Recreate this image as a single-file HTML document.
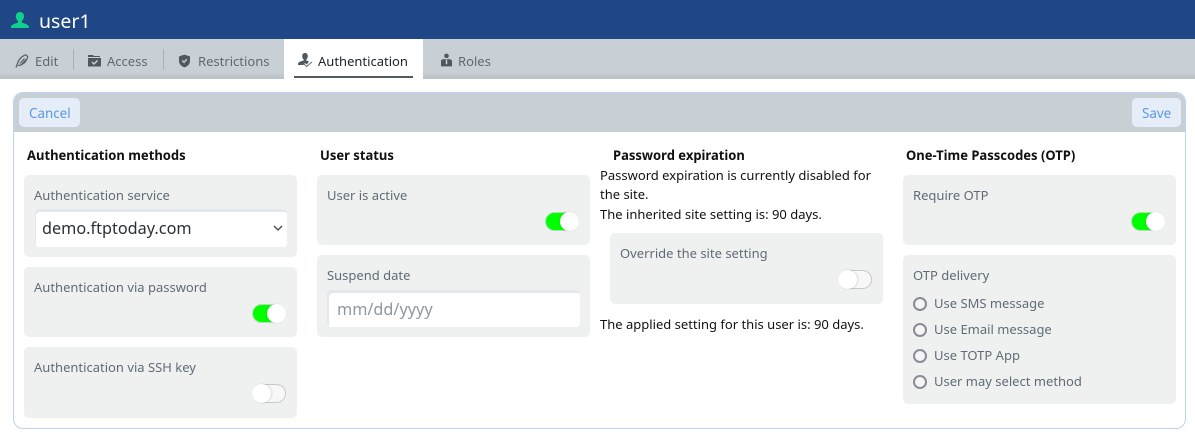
<!DOCTYPE html>
<html><head><meta charset="utf-8"><style>
html,body{margin:0;padding:0;width:1195px;height:435px;overflow:hidden;background:#fff}
body{position:relative;font-family:"Noto Sans","Liberation Sans",sans-serif;font-size:13px;color:#111}
div,svg,span{position:absolute}
.t{white-space:nowrap;line-height:20px;height:20px}
.h{font-weight:700;color:#111}
.l{color:#5f6b76}
.tab{color:#5f6870}
.box{background:#eff1f1;border-radius:5px}
.on,.off{width:34px;height:19px;border-radius:10px;box-sizing:border-box}
.on{background:#00ff00;border:1px solid #b5dcb5}
.off{background:#f8f8f8;border:1px solid #c9c9c9}
.k{width:19px;height:19px;border-radius:50%;background:#fff;top:-1px}
.on .k{right:-1px;box-shadow:-1px 0 2px rgba(0,0,0,.08)}
.off .k{left:-1px;box-shadow:1px 0 2px rgba(0,0,0,.13)}
.r{width:14px;height:14px;box-sizing:border-box;border:2px solid #8b8b97;border-radius:50%;left:913px;background:#f5f5f5}
.sep{width:1px;height:21px;top:49px;background:#a9b2b8}
.b{font-size:13.4px;color:#5b98e2}
</style></head><body>
<div style="left:0;top:0;width:1195px;height:39px;background:#204785"></div>
<svg style="left:11px;top:12px" width="18" height="17" viewBox="0 0 18 17"><path fill="#0fd08c" d="M9 0c2.600 0 4 1.900 4 4.300 0 2-.9 3.800-2.200 4.700v1.600c2.600.7 6.200 2 7 3.600V16H0v-1.800c.8-1.600 4.400-2.900 7-3.600V9C5.700 8.100 4.800 6.300 4.800 4.300 4.800 1.900 6.400 0 9 0z"/></svg>
<span class="t" style="left:39px;top:11px;font-size:19.500px;color:#fff">user1</span>

<div style="left:0;top:39px;width:1195px;height:40px;background:linear-gradient(#c8d0d6 0,#c8d0d6 33px,#b9c1c6 40px)"></div>
<div style="left:284px;top:39px;width:139px;height:40px;background:#fff"></div>
<div style="left:294px;top:76px;width:119px;height:2px;background:#555a60"></div>
<div class="sep" style="left:73px"></div><div class="sep" style="left:163px"></div>

<svg style="left:15px;top:54px" width="14" height="14" viewBox="0 0 14 14"><path fill="none" stroke="#5a6268" stroke-width="1.300" d="M1 13.500C1.500 12 2 11 2.500 9.500 3 6.500 6 3 9.500 1.200c1.500-.7 3.500.6 3 2.400C11.500 7 9 10 5 11.300L3 11.500M5 9.500L9.500 4.500M7 10L11 5.500"/></svg>
<span class="t tab" style="left:35px;top:51px">Edit</span>
<svg style="left:88px;top:54px" width="13" height="13" viewBox="0 0 13 13"><path fill="#50585e" d="M0 1h5l1 1h6v1H0zM0 4h13v8.500H0z"/><path fill="none" stroke="#c8d0d6" stroke-width="1.500" d="M4 8l2 2 3.500-3.500"/></svg>
<span class="t tab" style="left:107px;top:51px">Access</span>
<svg style="left:179px;top:54px" width="11" height="14" viewBox="0 0 12 14"><path fill="#50585e" d="M6 0l6 2v5c0 3.500-3 6-6 7-3-1-6-3.500-6-7V2z"/><path fill="none" stroke="#c8d0d6" stroke-width="1.500" d="M3.500 6.500L5.500 8.500 8.500 5"/></svg>
<span class="t tab" style="left:198px;top:51px">Restrictions</span>
<svg style="left:298px;top:53px" width="16" height="15" viewBox="0 0 16 15"><path fill="#50585e" d="M7 0c1.800 0 2.800 1.300 2.800 3S9 6 8.300 6.500v1c1 .3 2 .7 2.800 1.200L8.500 11.500 7 10l-1.500 1.500L6 12H0v-1.500C.5 9 3.500 8 5.700 7.500v-1C5 6 4.200 4.700 4.200 3S5.200 0 7 0z"/><path fill="none" stroke="#6a7278" stroke-width="1.100" d="M6 11l2.500 2.500L14 9"/></svg>
<span class="t" style="left:318px;top:51px;color:#1c2228">Authentication</span>
<svg style="left:441px;top:53px" width="11" height="14" viewBox="0 0 12 14"><circle cx="6" cy="2.500" r="2.500" fill="#50585e"/><path fill="#50585e" d="M0 14V8C0 6.500 2 6 4 6h4c2 0 4 .5 4 2v6z"/><path fill="#c8d0d6" d="M5.400 6h1.200L7 10.500 6 12 5 10.500z"/></svg>
<span class="t tab" style="left:458px;top:51px">Roles</span>

<div style="left:13px;top:92px;width:1173px;height:337px;box-sizing:border-box;border:1px solid #b9d5f0;border-radius:10px;overflow:hidden;background:#fff"><div style="left:0;top:0;width:1171px;height:39px;background:#c8d0d6"></div></div>
<div style="left:19px;top:98px;width:61px;height:29px;background:#e5eef8;border-radius:5px"></div>
<span class="t b" style="left:29px;top:103px">Cancel</span>
<div style="left:1132px;top:98px;width:49px;height:29px;background:#e5eef8;border-radius:5px"></div>
<span class="t b" style="left:1142px;top:103px">Save</span>

<span class="t h" style="left:27px;top:145px">Authentication methods</span>
<span class="t h" style="left:320px;top:145px">User status</span>
<span class="t h" style="left:613px;top:145px">Password expiration</span>
<span class="t h" style="left:906px;top:145px">One-Time Passcodes (OTP)</span>

<div class="box" style="left:24px;top:175px;width:273px;height:82px"></div>
<span class="t l" style="left:34px;top:185px">Authentication service</span>
<div style="left:35px;top:209px;width:252px;height:38px;background:#fff;border-radius:4px;box-shadow:inset 1px 3px 0 #e4e8ec"></div>
<span class="t" style="left:42px;top:218px;font-size:16.250px;color:#2b3036">demo.ftptoday.com</span>
<svg style="left:273px;top:225px" width="10" height="7" viewBox="0 0 10 7"><path fill="none" stroke="#444" stroke-width="1.300" d="M1 1l4 4 4-4"/></svg>

<div class="box" style="left:24px;top:267px;width:273px;height:70px"></div>
<span class="t l" style="left:34px;top:277px">Authentication via password</span>
<div class="on" style="left:252px;top:304px"><div class="k"></div></div>

<div class="box" style="left:24px;top:347px;width:273px;height:71px"></div>
<span class="t l" style="left:34px;top:357px">Authentication via SSH key</span>
<div class="off" style="left:252px;top:384px"><div class="k"></div></div>

<div class="box" style="left:317px;top:175px;width:273px;height:70px"></div>
<span class="t l" style="left:327px;top:185px">User is active</span>
<div class="on" style="left:545px;top:212px"><div class="k"></div></div>

<div class="box" style="left:317px;top:255px;width:273px;height:82px"></div>
<span class="t l" style="left:327px;top:265px">Suspend date</span>
<div style="left:327px;top:290px;width:253px;height:37px;background:#fff;border-radius:4px;box-shadow:inset 2px 3px 0 #e4e8ec"></div>
<span class="t" style="left:337px;top:299px;font-size:16.250px;color:#8f979f">mm/dd/yyyy</span>

<span class="t" style="left:600px;top:165px">Password expiration is currently disabled for</span>
<span class="t" style="left:600px;top:184px">the site.</span>
<span class="t" style="left:600px;top:204px">The inherited site setting is: 90 days.</span>
<div class="box" style="left:610px;top:233px;width:273px;height:71px"></div>
<span class="t l" style="left:620px;top:243px">Override the site setting</span>
<div class="off" style="left:838px;top:270px"><div class="k"></div></div>
<span class="t" style="left:600px;top:314px">The applied setting for this user is: 90 days.</span>

<div class="box" style="left:903px;top:175px;width:273px;height:70px"></div>
<span class="t l" style="left:913px;top:185px">Require OTP</span>
<div class="on" style="left:1131px;top:212px"><div class="k"></div></div>

<div class="box" style="left:903px;top:255px;width:273px;height:149px"></div>
<span class="t l" style="left:913px;top:265px">OTP delivery</span>
<div class="r" style="top:297px"></div><span class="t l" style="left:934px;top:293px">Use SMS message</span>
<div class="r" style="top:323px"></div><span class="t l" style="left:934px;top:319px">Use Email message</span>
<div class="r" style="top:349px"></div><span class="t l" style="left:934px;top:345px">Use TOTP App</span>
<div class="r" style="top:375px"></div><span class="t l" style="left:934px;top:371px">User may select method</span>
</body></html>
